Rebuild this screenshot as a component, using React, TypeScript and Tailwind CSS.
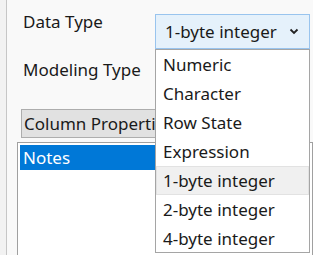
import React from 'react';

const options = [
  'Numeric',
  'Character',
  'Row State',
  'Expression',
  '1-byte integer',
  '2-byte integer',
  '4-byte integer',
];

const selected = '1-byte integer';

export default function App() {
  return (
    <div className="relative h-[255px] w-[313px] overflow-hidden bg-[#f9f9f9] font-['Noto_Sans',sans-serif] text-[17px] text-[#1a1a1a]">
      <div className="flex h-full">
        <div className="w-[6px] bg-[#f2f2f2]" />
        <div className="w-px bg-[#c6c6c6]" />
        <div className="flex flex-1 flex-col">
          {/* data type row */}
          <div className="flex h-[49px] items-start">
            <span className="ml-[16px] mt-[10px] leading-[24px]">Data Type</span>
            <button className="ml-auto mr-[3px] mt-[14px] flex h-[35px] w-[155px] items-center border border-[#99c4ee] bg-[#e5f1fb] pl-[9px] pr-[9px] text-left">
              <span className="flex-1">{selected}</span>
              <svg width="10" height="7" viewBox="0 0 10 7" className="mr-[1px]">
                <path d="M1.5 1.5 L5 5 L8.5 1.5" fill="none" stroke="#222" strokeWidth="1.8" />
              </svg>
            </button>
          </div>
          {/* modeling type row */}
          <div className="flex h-[60px] items-start">
            <span className="ml-[16px] mt-[9px] leading-[24px]">Modeling Type</span>
          </div>
          {/* column properties, runs on under the open list */}
          <div className="ml-[14px] flex h-[29px] w-[134px] items-center overflow-hidden whitespace-nowrap border border-r-0 border-[#adadad] bg-[#e1e1e1] pl-[2px]">
            Column Properties
          </div>
          <div className="ml-[10px] mt-[4px] flex-1 border border-b-0 border-[#a0a0a0] bg-white px-[2px] pt-[2px]">
            <div className="flex h-[25px] items-center bg-[#0078d7] pl-[3px] text-white">Notes</div>
          </div>
        </div>
      </div>

      {/* open dropdown list */}
      <ul className="absolute left-[155px] top-[49px] h-[204px] w-[155px] border border-[#a5a5a5] bg-white">
        {options.map((opt) => (
          <li
            key={opt}
            className={
              opt === selected
                ? 'flex h-[29px] items-center border border-[#e2e2e2] bg-[#f0f0f0] pl-[6px]'
                : 'flex h-[29px] items-center pl-[7px]'
            }
          >
            {opt}
          </li>
        ))}
      </ul>
    </div>
  );
}
